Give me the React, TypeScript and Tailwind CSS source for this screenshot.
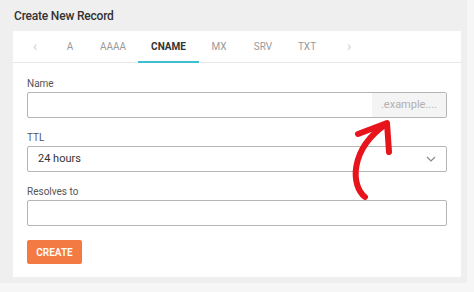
import React from "react";

const tabs = [
  { label: "‹", w: "w-[34px]", muted: true },
  { label: "A", w: "w-[36px]" },
  { label: "AAAA", w: "w-[50px]" },
  { label: "CNAME", w: "w-[61px]", active: true },
  { label: "MX", w: "w-[40px]" },
  { label: "SRV", w: "w-[48px]" },
  { label: "TXT", w: "w-[40px]" },
  { label: "›", w: "w-[44px]", muted: true },
];

const App: React.FC = () => {
  return (
    <div
      className="relative w-[474px] h-[292px] bg-[#f6f6f6] overflow-hidden"
      style={{ fontFamily: "Roboto, 'Liberation Sans', sans-serif" }}
    >
      <div className="w-[467px] h-[283px] bg-[#efefef] pt-[8px]">
        {/* Title */}
        <h1 className="pl-[14px] text-[12px] leading-[16px] font-medium text-[#333] tracking-[-0.2px]">
          Create New Record
        </h1>

        {/* Card */}
        <div className="ml-[13px] mt-[7px] w-[448px] h-[246px] bg-white">
          {/* Tabs */}
          <div className="flex h-[32px] pl-[5px] border-b border-[#e6e6e6]">
            {tabs.map((t) => (
              <div
                key={t.label}
                className={`${t.w} relative flex items-center justify-center text-[10px] ${
                  t.active
                    ? "font-bold text-[#333]"
                    : t.muted
                    ? "text-[#d0d0d0] text-[14px]"
                    : "text-[#9a9a9a]"
                }`}
              >
                {t.label}
                {t.active && (
                  <span className="absolute left-0 right-0 bottom-[-1px] h-[2px] bg-[#3cc0d0]" />
                )}
              </div>
            ))}
          </div>

          {/* Form */}
          <div className="px-[14px] pt-[14px]">
            <label className="block text-[10px] leading-[14px] text-[#555]">Name</label>
            <div className="mt-[1px] flex h-[26px] border border-[#b5b5b5] rounded-[2px]">
              <div className="flex-1" />
              <div className="w-[74px] bg-[#f4f4f4] flex items-center justify-center text-[11px] text-[#b0b0b0]">
                .example....
              </div>
            </div>

            <label className="block mt-[13px] text-[10px] leading-[14px] text-[#555]">TTL</label>
            <div className="mt-[1px] flex items-center justify-between h-[26px] border border-[#b5b5b5] rounded-[2px] pl-[10px] pr-[10px]">
              <span className="text-[11px] text-[#333]">24 hours</span>
              <svg width="10" height="6" viewBox="0 0 10 6" fill="none">
                <path d="M1 1l4 4 4-4" stroke="#888" strokeWidth="1.2" />
              </svg>
            </div>

            <label className="block mt-[13px] text-[10px] leading-[14px] text-[#555]">Resolves to</label>
            <div className="mt-[1px] h-[26px] border border-[#b5b5b5] rounded-[2px]" />

            <button className="mt-[14px] w-[55px] h-[24px] rounded-[2px] bg-[#f47a43] text-white text-[10px] font-semibold">
              CREATE
            </button>
          </div>
        </div>
      </div>

      {/* Hand-drawn arrow overlay */}
      <svg
        className="absolute left-0 top-0 pointer-events-none"
        width="474"
        height="292"
        viewBox="0 0 474 292"
        fill="none"
      >
        <path
          d="M365 197 C 351 186, 349 150, 386 124"
          stroke="#e8141b"
          strokeWidth="6"
          strokeLinecap="round"
        />
        <path
          d="M358 134 L387 123 L389 152"
          stroke="#e8141b"
          strokeWidth="6"
          strokeLinecap="round"
          strokeLinejoin="round"
        />
      </svg>
    </div>
  );
};

export default App;
